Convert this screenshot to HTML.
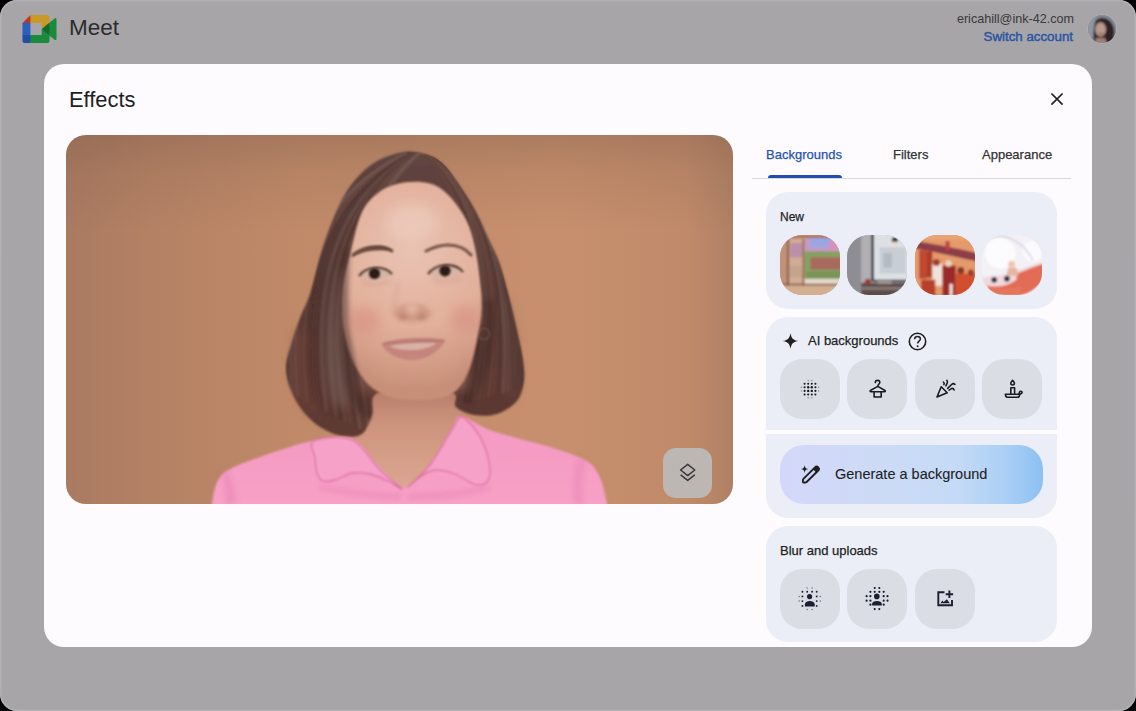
<!DOCTYPE html>
<html><head><meta charset="utf-8">
<style>
*{box-sizing:border-box;margin:0;padding:0}
html,body{width:1136px;height:711px;overflow:hidden;background:#000;font-family:"Liberation Sans",sans-serif}
.frame{position:absolute;left:0;top:0;width:1136px;height:711px;background:#a7a5a8;border-radius:17px;overflow:hidden;box-shadow:inset 0 0 0 1.5px #b2b0b3}
.abs{position:absolute;white-space:nowrap}
.modal{position:absolute;left:44px;top:64px;width:1048px;height:583px;background:#fdfbfe;border-radius:20px}
.card{position:absolute;left:766px;width:291px;background:#ebeef6}
.btn{position:absolute;width:60px;height:60px;background:#dadde4;border-radius:22px}
.btn svg{position:absolute;left:0;top:0}
.med{-webkit-text-stroke:0.25px currentColor}
.thumb{position:absolute;top:235px;width:60px;height:60px;border-radius:22px;overflow:hidden}
</style></head><body>
<div class="frame">
  <!-- header -->
  <svg class="abs" style="left:22px;top:15px" width="35" height="28" viewBox="0 0 87.5 72">
    <g>
    <path fill="#136a2c" d="M49.5 36l8.53 9.75 11.47 7.33 2-17.02-2-16.64-11.69 6.44z"/>
    <path fill="#1f4fa6" d="M0 51.5V66c0 3.315 2.685 6 6 6h14.5l3-10.96-3-9.54-9.950-3z"/>
    <path fill="#b8392c" d="M20.5 0L0 20.5l10.55 3 9.95-3 2.950-9.41z"/>
    <path fill="#2a5fc2" d="M20.5 20.5H0v31h20.5z"/>
    <path fill="#1a8a3c" d="M82.6 8.68L69.5 19.42v33.66l13.16 10.79c1.97 1.54 4.85.135 4.85-2.37V11c0-2.535-2.945-3.925-4.91-2.32zM49.5 36v15.5h-29V72h43c3.315 0 6-2.685 6-6V53.08z"/>
    <path fill="#c99a26" d="M63.5 0h-43v20.5h29V36l20-16.57V6c0-3.315-2.685-6-6-6z"/>
    </g>
  </svg>
  <div class="abs" style="left:69px;top:15px;font-size:22.5px;color:#2d2c2e;line-height:26px">Meet</div>
  <div class="abs" style="right:62px;top:11px;font-size:12.6px;color:#3a393b;line-height:16px">ericahill@ink-42.com</div>
  <div class="abs" style="right:63px;top:29px;font-size:13.3px;color:#2a56a2;line-height:16px;-webkit-text-stroke:0.45px #2a56a2">Switch account</div>
  <div class="abs" style="left:1087.5px;top:14.5px;width:28px;height:28px;border-radius:50%;overflow:hidden;background:#7f8690;box-shadow:0 0 0 0.8px #b4b2b6">
    <svg width="28" height="28" viewBox="0 0 28 28"><defs><filter id="av"><feGaussianBlur stdDeviation="0.8"/></filter></defs>
    <g filter="url(#av)">
    <rect width="28" height="28" fill="#858c96"/>
    <rect x="0" y="0" width="8" height="28" fill="#8f96a0"/>
    <path d="M12 3 C 19 2 24 6 26 13 C 27 19 26 25 24 28 L 6 28 C 5 22 5.5 12 7 8 C 8 5 10 3.5 12 3 Z" fill="#2f2421"/>
    <ellipse cx="12.6" cy="14.5" rx="5.4" ry="7.2" fill="#b9998e"/>
    <path d="M8 23 L 17 23 L 19 28 L 7 28 Z" fill="#9f8076"/>
    <path d="M10.5 18 C 11.8 19.6 14 19.6 15.3 18" stroke="#6a4844" stroke-width="1" fill="none"/>
    <path d="M7 6 C 10 3 16 3 19 7 L 16 8 C 14 6 11 6 9 9 Z" fill="#2f2421"/>
    </g></svg>
  </div>

  <div class="modal"></div>
  <div class="abs" style="left:69px;top:87px;font-size:21.9px;color:#1f1f1f;line-height:26px">Effects</div>
  <svg class="abs" style="left:1045px;top:87px" width="24" height="24" viewBox="0 0 24 24"><path d="M6.4 6.5L17.6 17.7M17.6 6.5L6.4 17.7" stroke="#1f1f1f" stroke-width="1.7"/></svg>

  <!-- photo -->
  <div class="abs" style="left:66px;top:135px;width:667px;height:369px;border-radius:20px;overflow:hidden"><svg style="position:absolute;left:0;top:0" width="667" height="369" viewBox="66 135 667 369">
  <defs>
    <linearGradient id="bgx" x1="66" y1="0" x2="733" y2="0" gradientUnits="userSpaceOnUse">
      <stop offset="0" stop-color="#a97a61"/>
      <stop offset="0.125" stop-color="#b48164"/>
      <stop offset="0.35" stop-color="#c08a69"/>
      <stop offset="0.74" stop-color="#c78f6d"/>
      <stop offset="0.93" stop-color="#c08a6a"/>
      <stop offset="1" stop-color="#b08064"/>
    </linearGradient>
    <linearGradient id="bgtop" x1="0" y1="135" x2="0" y2="504" gradientUnits="userSpaceOnUse">
      <stop offset="0" stop-color="#6e5041" stop-opacity="0.3"/>
      <stop offset="0.1" stop-color="#6e5041" stop-opacity="0.13"/>
      <stop offset="0.26" stop-color="#6e5041" stop-opacity="0"/>
      <stop offset="1" stop-color="#6e5041" stop-opacity="0"/>
    </linearGradient>
    <linearGradient id="hairg" x1="0" y1="150" x2="0" y2="435" gradientUnits="userSpaceOnUse">
      <stop offset="0" stop-color="#614541"/>
      <stop offset="0.5" stop-color="#553832"/>
      <stop offset="1" stop-color="#5e3a30"/>
    </linearGradient>
    <radialGradient id="skin" cx="411" cy="250" r="140" gradientUnits="userSpaceOnUse">
      <stop offset="0" stop-color="#e9c3b3"/>
      <stop offset="0.55" stop-color="#e2b09b"/>
      <stop offset="1" stop-color="#c99079"/>
    </radialGradient>
    <linearGradient id="neckg" x1="0" y1="385" x2="0" y2="490" gradientUnits="userSpaceOnUse">
      <stop offset="0" stop-color="#b27a66"/>
      <stop offset="0.35" stop-color="#cc937c"/>
      <stop offset="1" stop-color="#dca892"/>
    </linearGradient>
    <linearGradient id="shirtg" x1="0" y1="420" x2="0" y2="504" gradientUnits="userSpaceOnUse">
      <stop offset="0" stop-color="#f49ac3"/>
      <stop offset="1" stop-color="#f8a0c6"/>
    </linearGradient>
    <filter id="b1" filterUnits="userSpaceOnUse" x="66" y="135" width="667" height="369"><feGaussianBlur stdDeviation="1"/></filter>
    <filter id="b2" filterUnits="userSpaceOnUse" x="66" y="135" width="667" height="369"><feGaussianBlur stdDeviation="2.5"/></filter>
    <filter id="b4" filterUnits="userSpaceOnUse" x="66" y="135" width="667" height="369"><feGaussianBlur stdDeviation="6"/></filter>
  </defs>
  <rect x="66" y="135" width="667" height="369" fill="url(#bgx)"/>
  <rect x="66" y="135" width="667" height="369" fill="url(#bgtop)"/>
  <path filter="url(#b1)" fill="url(#neckg)" d="M366.0 370.0 C382.7 363.0 444.0 363.3 460.0 370.0 C476.0 376.7 460.3 400.8 462.0 410.0 C463.7 419.2 473.7 415.7 470.0 425.0 C466.3 434.3 450.8 455.5 440.0 466.0 C429.2 476.5 416.3 488.0 405.0 488.0 C393.7 488.0 381.8 474.0 372.0 466.0 C362.2 458.0 348.0 449.0 346.0 440.0 C344.0 431.0 356.7 423.7 360.0 412.0 C363.3 400.3 349.3 377.0 366.0 370.0 Z"/>
  <path filter="url(#b1)" fill="url(#hairg)" d="M404.0 152.0 C412.0 150.8 418.7 152.2 425.0 154.0 C431.3 155.8 436.5 158.2 442.0 163.0 C447.5 167.8 452.5 175.2 458.0 183.0 C463.5 190.8 469.8 200.5 475.0 210.0 C480.2 219.5 485.0 231.3 489.0 240.0 C493.0 248.7 495.8 253.2 499.0 262.0 C502.2 270.8 505.0 281.7 508.0 293.0 C511.0 304.3 514.5 318.8 517.0 330.0 C519.5 341.2 521.8 351.5 523.0 360.0 C524.2 368.5 525.0 374.2 524.0 381.0 C523.0 387.8 521.5 395.5 517.0 401.0 C512.5 406.5 504.2 411.7 497.0 414.0 C489.8 416.3 480.8 416.2 474.0 415.0 C467.2 413.8 460.0 410.8 456.0 407.0 C452.0 403.2 462.7 394.5 450.0 392.0 C437.3 389.5 393.0 388.2 380.0 392.0 C367.0 395.8 375.0 408.0 372.0 415.0 C369.0 422.0 367.0 430.5 362.0 434.0 C357.0 437.5 349.0 437.2 342.0 436.0 C335.0 434.8 326.7 431.3 320.0 427.0 C313.3 422.7 307.0 416.5 302.0 410.0 C297.0 403.5 292.7 395.3 290.0 388.0 C287.3 380.7 285.7 373.7 286.0 366.0 C286.3 358.3 289.7 350.0 292.0 342.0 C294.3 334.0 297.0 326.0 300.0 318.0 C303.0 310.0 306.3 305.3 310.0 294.0 C313.7 282.7 317.3 264.3 322.0 250.0 C326.7 235.7 332.5 219.7 338.0 208.0 C343.5 196.3 348.5 187.8 355.0 180.0 C361.5 172.2 368.8 165.7 377.0 161.0 C385.2 156.3 396.0 153.2 404.0 152.0 Z"/>
  <defs><clipPath id="hairclip"><path d="M404.0 152.0 C412.0 150.8 418.7 152.2 425.0 154.0 C431.3 155.8 436.5 158.2 442.0 163.0 C447.5 167.8 452.5 175.2 458.0 183.0 C463.5 190.8 469.8 200.5 475.0 210.0 C480.2 219.5 485.0 231.3 489.0 240.0 C493.0 248.7 495.8 253.2 499.0 262.0 C502.2 270.8 505.0 281.7 508.0 293.0 C511.0 304.3 514.5 318.8 517.0 330.0 C519.5 341.2 521.8 351.5 523.0 360.0 C524.2 368.5 525.0 374.2 524.0 381.0 C523.0 387.8 521.5 395.5 517.0 401.0 C512.5 406.5 504.2 411.7 497.0 414.0 C489.8 416.3 480.8 416.2 474.0 415.0 C467.2 413.8 460.0 410.8 456.0 407.0 C452.0 403.2 462.7 394.5 450.0 392.0 C437.3 389.5 393.0 388.2 380.0 392.0 C367.0 395.8 375.0 408.0 372.0 415.0 C369.0 422.0 367.0 430.5 362.0 434.0 C357.0 437.5 349.0 437.2 342.0 436.0 C335.0 434.8 326.7 431.3 320.0 427.0 C313.3 422.7 307.0 416.5 302.0 410.0 C297.0 403.5 292.7 395.3 290.0 388.0 C287.3 380.7 285.7 373.7 286.0 366.0 C286.3 358.3 289.7 350.0 292.0 342.0 C294.3 334.0 297.0 326.0 300.0 318.0 C303.0 310.0 306.3 305.3 310.0 294.0 C313.7 282.7 317.3 264.3 322.0 250.0 C326.7 235.7 332.5 219.7 338.0 208.0 C343.5 196.3 348.5 187.8 355.0 180.0 C361.5 172.2 368.8 165.7 377.0 161.0 C385.2 156.3 396.0 153.2 404.0 152.0 Z"/></clipPath></defs><g clip-path="url(#hairclip)" filter="url(#b1)"><path d="M420.0 153.0 Q330.0 230.0 370.0 434.0" stroke="#86716a" stroke-width="2.1" opacity="0.44" fill="none"/><path d="M419.1 152.9 Q326.6 229.1 365.2 431.5" stroke="#7a5548" stroke-width="2.3" opacity="0.22" fill="none"/><path d="M418.2 152.9 Q323.2 228.2 360.4 429.1" stroke="#86716a" stroke-width="2.9" opacity="0.35" fill="none"/><path d="M417.4 152.8 Q319.8 227.4 355.5 426.6" stroke="#3e2722" stroke-width="2.2" opacity="0.21" fill="none"/><path d="M416.5 152.8 Q316.4 226.5 350.7 424.1" stroke="#7a5548" stroke-width="2.3" opacity="0.26" fill="none"/><path d="M415.6 152.7 Q312.9 225.6 345.9 421.6" stroke="#7a5548" stroke-width="1.7" opacity="0.41" fill="none"/><path d="M414.7 152.6 Q309.5 224.7 341.1 419.2" stroke="#3e2722" stroke-width="2.4" opacity="0.36" fill="none"/><path d="M413.8 152.6 Q306.1 223.8 336.2 416.7" stroke="#7a5548" stroke-width="2.1" opacity="0.34" fill="none"/><path d="M412.9 152.5 Q302.7 222.9 331.4 414.2" stroke="#3e2722" stroke-width="2.8" opacity="0.21" fill="none"/><path d="M412.1 152.5 Q299.3 222.1 326.6 411.8" stroke="#86716a" stroke-width="2.3" opacity="0.30" fill="none"/><path d="M411.2 152.4 Q295.9 221.2 321.8 409.3" stroke="#4a302a" stroke-width="2.7" opacity="0.28" fill="none"/><path d="M410.3 152.4 Q292.5 220.3 316.9 406.8" stroke="#3e2722" stroke-width="2.4" opacity="0.23" fill="none"/><path d="M409.4 152.3 Q289.1 219.4 312.1 404.4" stroke="#3e2722" stroke-width="2.3" opacity="0.29" fill="none"/><path d="M408.5 152.2 Q285.6 218.5 307.3 401.9" stroke="#7a5548" stroke-width="2.4" opacity="0.34" fill="none"/><path d="M407.6 152.2 Q282.2 217.6 302.5 399.4" stroke="#6b4538" stroke-width="2.1" opacity="0.37" fill="none"/><path d="M406.8 152.1 Q278.8 216.8 297.6 396.9" stroke="#86716a" stroke-width="2.9" opacity="0.32" fill="none"/><path d="M405.9 152.1 Q275.4 215.9 292.8 394.5" stroke="#86716a" stroke-width="2.7" opacity="0.27" fill="none"/><path d="M405.0 152.0 Q272.0 215.0 288.0 392.0" stroke="#3e2722" stroke-width="2.0" opacity="0.22" fill="none"/><path d="M424.0 153.0 Q500.0 230.0 455.0 406.0" stroke="#6b4538" stroke-width="2.6" opacity="0.42" fill="none"/><path d="M424.6 153.1 Q501.6 229.3 459.8 404.7" stroke="#7d6a62" stroke-width="1.6" opacity="0.35" fill="none"/><path d="M425.1 153.1 Q503.1 228.6 464.6 403.4" stroke="#4a302a" stroke-width="2.6" opacity="0.30" fill="none"/><path d="M425.7 153.2 Q504.7 227.9 469.4 402.1" stroke="#3e2722" stroke-width="2.1" opacity="0.43" fill="none"/><path d="M426.3 153.3 Q506.3 227.1 474.1 400.9" stroke="#7a5548" stroke-width="2.4" opacity="0.39" fill="none"/><path d="M426.9 153.4 Q507.9 226.4 478.9 399.6" stroke="#7d6a62" stroke-width="2.0" opacity="0.29" fill="none"/><path d="M427.4 153.4 Q509.4 225.7 483.7 398.3" stroke="#6b4538" stroke-width="2.2" opacity="0.34" fill="none"/><path d="M428.0 153.5 Q511.0 225.0 488.5 397.0" stroke="#7a5548" stroke-width="2.2" opacity="0.44" fill="none"/><path d="M428.6 153.6 Q512.6 224.3 493.3 395.7" stroke="#7a5548" stroke-width="2.6" opacity="0.22" fill="none"/><path d="M429.1 153.6 Q514.1 223.6 498.1 394.4" stroke="#4a302a" stroke-width="2.7" opacity="0.45" fill="none"/><path d="M429.7 153.7 Q515.7 222.9 502.9 393.1" stroke="#7d6a62" stroke-width="2.8" opacity="0.38" fill="none"/><path d="M430.3 153.8 Q517.3 222.1 507.6 391.9" stroke="#7d6a62" stroke-width="2.2" opacity="0.21" fill="none"/><path d="M430.9 153.9 Q518.9 221.4 512.4 390.6" stroke="#3e2722" stroke-width="2.2" opacity="0.35" fill="none"/><path d="M431.4 153.9 Q520.4 220.7 517.2 389.3" stroke="#3e2722" stroke-width="1.7" opacity="0.39" fill="none"/><path d="M432.0 154.0 Q522.0 220.0 522.0 388.0" stroke="#3e2722" stroke-width="2.9" opacity="0.30" fill="none"/></g>
  <path filter="url(#b1)" fill="url(#skin)" d="M421.0 182.0 C428.2 182.7 434.2 184.3 440.0 188.0 C445.8 191.7 451.2 197.7 456.0 204.0 C460.8 210.3 465.7 218.0 469.0 226.0 C472.3 234.0 474.2 243.0 476.0 252.0 C477.8 261.0 479.0 270.5 480.0 280.0 C481.0 289.5 482.3 299.7 482.0 309.0 C481.7 318.3 480.0 326.2 478.0 336.0 C476.0 345.8 473.3 359.2 470.0 368.0 C466.7 376.8 463.0 384.0 458.0 389.0 C453.0 394.0 447.5 396.2 440.0 398.0 C432.5 399.8 421.3 400.2 413.0 400.0 C404.7 399.8 397.2 399.3 390.0 397.0 C382.8 394.7 376.0 391.5 370.0 386.0 C364.0 380.5 358.2 372.3 354.0 364.0 C349.8 355.7 347.0 345.3 345.0 336.0 C343.0 326.7 342.2 317.3 342.0 308.0 C341.8 298.7 342.5 289.7 344.0 280.0 C345.5 270.3 348.0 261.3 351.0 250.0 C354.0 238.7 357.5 221.5 362.0 212.0 C366.5 202.5 372.2 197.7 378.0 193.0 C383.8 188.3 389.8 185.8 397.0 184.0 C404.2 182.2 413.8 181.3 421.0 182.0 Z"/>
  <!-- hair shading / streaks -->
  <path filter="url(#b2)" fill="#3f2823" opacity="0.5" d="M346 250 C 336 290 332 340 346 395 C 356 410 366 420 372 420 C 365 400 356 370 351 340 C 348 320 347 290 350 250 Z"/>
  <path filter="url(#b2)" fill="#3f2823" opacity="0.45" d="M483 300 C 483 340 476 370 456 400 L 470 405 C 490 380 498 340 496 300 Z"/>
  <path filter="url(#b4)" fill="#8a7770" opacity="0.45" d="M338 270 C 324 320 322 370 334 405 L 350 408 C 342 370 340 320 342 270 Z"/>
  <path filter="url(#b4)" fill="#7c4a3e" opacity="0.45" d="M296 330 C 290 360 292 390 310 416 L 320 412 C 304 390 302 360 308 330 Z"/>
  <path filter="url(#b4)" fill="#7a5e55" opacity="0.35" d="M500 300 C 508 330 512 360 505 395 L 515 395 C 520 360 516 330 508 300 Z"/>
  <!-- shirt -->
  <path filter="url(#b1)" fill="url(#shirtg)" d="M212.0 520.0 C180.7 515.7 211.5 509.3 212.0 504.0 C212.5 498.7 213.5 492.7 215.0 488.0 C216.5 483.3 218.2 479.3 221.0 476.0 C223.8 472.7 225.5 471.2 232.0 468.0 C238.5 464.8 250.3 460.5 260.0 457.0 C269.7 453.5 281.0 449.7 290.0 447.0 C299.0 444.3 303.7 442.3 314.0 441.0 C324.3 439.7 341.3 434.8 352.0 439.0 C362.7 443.2 369.5 458.0 378.0 466.0 C386.5 474.0 394.7 486.7 403.0 487.0 C411.3 487.3 419.8 477.5 428.0 468.0 C436.2 458.5 446.5 438.5 452.0 430.0 C457.5 421.5 454.7 417.0 461.0 417.0 C467.3 417.0 480.2 426.3 490.0 430.0 C499.8 433.7 510.0 436.2 520.0 439.0 C530.0 441.8 540.7 444.2 550.0 447.0 C559.3 449.8 569.0 453.0 576.0 456.0 C583.0 459.0 587.8 461.0 592.0 465.0 C596.2 469.0 598.8 475.0 601.0 480.0 C603.2 485.0 604.0 491.0 605.0 495.0 C606.0 499.0 606.7 499.8 607.0 504.0 C607.3 508.2 641.5 515.7 607.0 520.0 C572.5 524.3 465.8 530.0 400.0 530.0 C334.2 530.0 243.3 524.3 212.0 520.0 Z"/>
  <path filter="url(#b1)" fill="#f6a2c8" stroke="#dc6fa4" stroke-width="1.3" d="M314.0 441.0 C307.8 444.0 314.5 452.7 315.0 458.0 C315.5 463.3 315.7 469.2 317.0 473.0 C318.3 476.8 320.0 479.8 323.0 481.0 C326.0 482.2 330.2 481.3 335.0 480.0 C339.8 478.7 346.2 474.0 352.0 473.0 C357.8 472.0 364.0 472.7 370.0 474.0 C376.0 475.3 382.7 478.5 388.0 481.0 C393.3 483.5 403.3 490.8 402.0 489.0 C400.7 487.2 388.3 478.2 380.0 470.0 C371.7 461.8 363.0 444.8 352.0 440.0 C341.0 435.2 320.2 438.0 314.0 441.0 Z"/>
  <path filter="url(#b1)" fill="#f6a2c8" stroke="#dc6fa4" stroke-width="1.3" d="M461.0 417.0 C464.7 416.7 470.2 423.3 474.0 428.0 C477.8 432.7 481.3 438.0 484.0 445.0 C486.7 452.0 489.7 463.7 490.0 470.0 C490.3 476.3 488.7 480.7 486.0 483.0 C483.3 485.3 479.2 485.5 474.0 484.0 C468.8 482.5 461.5 476.3 455.0 474.0 C448.5 471.7 440.8 469.5 435.0 470.0 C429.2 470.5 424.5 474.2 420.0 477.0 C415.5 479.8 406.3 489.0 408.0 487.0 C409.7 485.0 422.7 474.5 430.0 465.0 C437.3 455.5 446.8 438.0 452.0 430.0 C457.2 422.0 457.3 417.3 461.0 417.0 Z"/>
  <path filter="url(#b2)" fill="#e27cae" opacity="0.35" d="M322 484 C 340 490 380 492 401 494 L 401 500 C 370 498 340 495 318 490 Z"/>
  <path filter="url(#b2)" fill="#e27cae" opacity="0.35" d="M488 484 C 470 490 440 492 408 494 L 408 500 C 440 500 470 496 490 490 Z"/>
  <path filter="url(#b2)" fill="#e27cae" opacity="0.4" d="M226 470 C 232 480 236 492 236 504 L 226 504 C 226 492 224 480 222 472 Z"/>
  <path filter="url(#b2)" fill="#e27cae" opacity="0.35" d="M578 458 C 574 470 572 488 574 504 L 584 504 C 582 488 582 472 586 460 Z"/>
  <!-- eyebrows -->
  <path filter="url(#b1)" fill="#5e4034" opacity="0.85" d="M351 257 C 358 250 368 246 376 246 C 384 246 390 248 393 251 C 386 250 378 250 370 251 C 362 252 356 255 351 257 Z"/>
  <path filter="url(#b1)" fill="none" stroke="#5e4034" stroke-width="3" opacity="0.85" stroke-linecap="round" d="M353 255 C 360 249 370 247 378 247 C 384 247 389 249 392 251"/>
  <path filter="url(#b1)" fill="none" stroke="#5e4034" stroke-width="3" opacity="0.85" stroke-linecap="round" d="M426 251 C 432 248 440 245 448 245 C 458 245 466 249 471 255"/>
  <!-- eyes -->
  <path filter="url(#b1)" fill="#d6b4a6" d="M360 276 C 366 267 384 266 391 275 C 384 280 366 281 360 276 Z"/>
  <path filter="url(#b1)" fill="#d6b4a6" d="M429 274 C 436 265 455 264 462 272 C 455 277 436 278 429 274 Z"/>
  <circle filter="url(#b1)" cx="374.5" cy="273.5" r="5.6" fill="#2a1c19"/>
  <circle filter="url(#b1)" cx="445" cy="270.8" r="5.6" fill="#2a1c19"/>
  <path filter="url(#b1)" fill="none" stroke="#3f2b26" stroke-width="2" d="M359 276 C 366 266 384 265 392 274"/>
  <path filter="url(#b1)" fill="none" stroke="#3f2b26" stroke-width="2" d="M428 274 C 436 263 455 262 463 272"/>
  <path filter="url(#b2)" fill="none" stroke="#b98472" stroke-width="2" opacity="0.5" d="M362 282 C 370 285 382 285 390 281"/>
  <path filter="url(#b2)" fill="none" stroke="#b98472" stroke-width="2" opacity="0.5" d="M432 279 C 440 282 452 282 460 278"/>
  <!-- nose -->
  <path filter="url(#b2)" fill="#c08470" opacity="0.55" d="M393 314 C 398 324 426 324 432 314 C 428 306 420 304 413 304 C 404 304 396 306 393 314 Z"/>
  <ellipse filter="url(#b2)" cx="403" cy="317" rx="4" ry="2" fill="#8e5a4c" opacity="0.55"/>
  <ellipse filter="url(#b2)" cx="422" cy="317" rx="4" ry="2" fill="#8e5a4c" opacity="0.55"/>
  <ellipse filter="url(#b2)" cx="412" cy="309" rx="6" ry="5" fill="#eec6b4" opacity="0.6"/>
  <path filter="url(#b2)" fill="none" stroke="#c99482" stroke-width="3" opacity="0.4" d="M398 282 C 396 295 394 305 394 312"/>
  <!-- mouth -->
  <path filter="url(#b1)" fill="#c5857d" d="M381 344 C 396 337 430 336 446 340 C 438 354 424 360 412 360 C 398 360 387 354 381 344 Z"/>
  <path filter="url(#b1)" fill="#d9b2a6" d="M389 346 C 402 343 424 342 437 343 C 428 349 420 350 412 350 C 402 350 395 349 389 346 Z"/>
  <path filter="url(#b1)" fill="none" stroke="#9c5e58" stroke-width="1.2" opacity="0.6" d="M383 344 C 398 341 428 340 444 341"/>
  <!-- cheeks -->
  <ellipse filter="url(#b4)" cx="364" cy="320" rx="16" ry="13" fill="#d4857c" opacity="0.45"/>
  <ellipse filter="url(#b4)" cx="465" cy="318" rx="14" ry="13" fill="#d4857c" opacity="0.45"/>
  <ellipse filter="url(#b4)" cx="412" cy="222" rx="26" ry="18" fill="#f0d0c2" opacity="0.55"/>
  <path filter="url(#b4)" fill="#c08a75" opacity="0.35" d="M360 350 C 370 380 395 400 413 400 C 435 400 460 380 470 350 L 470 390 L 360 390 Z"/>
  <circle filter="url(#b1)" cx="484" cy="334" r="5.5" fill="none" stroke="#8a6e62" stroke-width="1.2" opacity="0.6"/>
</svg>



</div>
  <div class="abs" style="left:663px;top:448px;width:49px;height:50px;border-radius:13px;background:#bdb7b4"></div>

  <!-- tabs -->
  <div class="abs med" style="left:766px;top:147px;font-size:13px;color:#1f54b0;line-height:16px">Backgrounds</div>
  <div class="abs med" style="left:893px;top:147px;font-size:13px;color:#333;line-height:16px">Filters</div>
  <div class="abs med" style="left:982px;top:147px;font-size:13px;color:#333;line-height:16px">Appearance</div>
  <div class="abs" style="left:752px;top:177.5px;width:319px;height:1.2px;background:#d9dade"></div>
  <div class="abs" style="left:768px;top:175px;width:74px;height:3px;background:#1f4fab;border-radius:3px 3px 0 0"></div>

  <!-- New card -->
  <div class="card" style="top:192px;height:117px;border-radius:22px"></div>
  <div class="abs med" style="left:780px;top:209px;font-size:12px;color:#1f1f1f;line-height:16px">New</div>
  <div class="thumb" style="left:780px;background:#c79a86"><svg width="61" height="61" viewBox="0 0 60 60"><defs><filter id="tb1"><feGaussianBlur stdDeviation="0.8"/></filter></defs>
<g filter="url(#tb1)">
<rect x="-2" y="-2" width="64" height="64" fill="#cca48c"/>
<rect x="-2" y="0" width="10" height="50" fill="#c09278"/>
<rect x="9" y="5" width="14" height="42" fill="#d2ad96"/>
<rect x="10" y="8" width="12" height="14" fill="#bc8fa8"/>
<rect x="10" y="30" width="12" height="12" fill="#c4a48c"/>
<rect x="24" y="2" width="38" height="15" fill="#c49ac6"/>
<rect x="30" y="3" width="22" height="9" fill="#9aa6e4"/>
<rect x="48" y="6" width="14" height="8" fill="#d890b8"/>
<rect x="24" y="16" width="38" height="28" fill="#86a062"/>
<rect x="30" y="22" width="30" height="12" fill="#a86a5c"/>
<rect x="26" y="36" width="34" height="7" fill="#7a9458"/>
<rect x="24" y="43" width="38" height="6" fill="#e4d8cc"/>
<rect x="-2" y="49" width="64" height="13" fill="#d4ae90"/>
<rect x="7" y="4" width="2" height="46" fill="#8a5a40"/>
<rect x="22" y="4" width="2" height="46" fill="#a0705a"/>
<rect x="-2" y="0" width="64" height="3" fill="#ac765c"/>
<rect x="-2" y="48" width="64" height="1.5" fill="#7a5a48"/>
</g></svg></div>
  <div class="thumb" style="left:847px;background:#a8a6a8"><svg width="61" height="61" viewBox="0 0 60 60"><defs><filter id="tb2"><feGaussianBlur stdDeviation="0.8"/></filter></defs>
<g filter="url(#tb2)">
<rect x="-2" y="-2" width="64" height="64" fill="#d4d8dd"/>
<rect x="-2" y="-2" width="20" height="64" fill="#8e8d93"/>
<rect x="14" y="-2" width="10" height="52" fill="#b1afb3"/>
<rect x="24" y="-2" width="2.5" height="48" fill="#26262c"/>
<rect x="26.5" y="-2" width="36" height="47" fill="#dde1e6"/>
<rect x="32" y="12" width="26" height="26" fill="#c8ced4"/>
<rect x="36" y="18" width="8" height="14" fill="#b4bac2"/>
<circle cx="47" cy="5" r="3" fill="#3a3434"/>
<circle cx="47" cy="8.5" r="2.2" fill="#f0d8c4"/>
<rect x="26" y="44" width="36" height="2.5" fill="#4a4448"/>
<rect x="14" y="47" width="48" height="15" fill="#5c4c4a"/>
<rect x="30" y="45" width="14" height="3" fill="#a89c98"/>
<rect x="14" y="51" width="48" height="3" fill="#877874"/>
<circle cx="20.5" cy="46" r="3" fill="#9a3a34"/>
</g></svg></div>
  <div class="thumb" style="left:915px;background:#d9825f"><svg width="61" height="61" viewBox="0 0 60 60"><defs><filter id="tb3"><feGaussianBlur stdDeviation="0.8"/></filter></defs>
<g filter="url(#tb3)">
<rect x="-2" y="-2" width="64" height="64" fill="#e49a6a"/>
<path d="M-2 6 C 15 8 35 12 62 18 L 62 26 C 40 22 20 16 -2 13 Z" fill="#8c3c48"/>
<rect x="-2" y="-2" width="64" height="7" fill="#e8a472"/>
<rect x="30" y="6" width="4" height="9" fill="#c04040"/>
<rect x="4" y="15" width="7" height="28" fill="#c04a30"/>
<rect x="11" y="16" width="6" height="26" fill="#b03a28"/>
<rect x="17" y="28" width="10" height="22" fill="#f0e2da"/>
<circle cx="21" cy="27" r="3.5" fill="#a04030"/>
<rect x="27" y="30" width="13" height="30" fill="#9a2c2a"/>
<circle cx="33" cy="28" r="3.2" fill="#ecd2c0"/>
<rect x="40" y="38" width="22" height="24" fill="#d2502e"/>
<circle cx="45" cy="35" r="3.5" fill="#8a3424"/>
<circle cx="55" cy="37" r="3" fill="#9a3a2a"/>
<rect x="6" y="44" width="14" height="16" fill="#b8402c"/>
<rect x="34" y="48" width="3" height="12" fill="#f4e8e0"/>
</g></svg></div>
  <div class="thumb" style="left:982px;background:#eed9dc"><svg width="61" height="61" viewBox="0 0 60 60"><defs><filter id="tb4"><feGaussianBlur stdDeviation="0.8"/></filter></defs>
<g filter="url(#tb4)">
<rect x="-2" y="-2" width="64" height="64" fill="#f3f1f6"/>
<circle cx="18" cy="18" r="15" fill="#fcfbfd"/>
<circle cx="50" cy="16" r="10" fill="#fbfafc"/>
<path d="M8 2 C 25 -2 42 8 50 25" fill="none" stroke="#c9c4d2" stroke-width="1.1"/>
<path d="M0 42 C 8 40 18 40 26 38 C 36 34 48 30 62 26 L 62 40 C 55 52 40 62 24 60 C 12 58 4 52 0 46 Z" fill="#f1d8dc"/>
<path d="M34 38 C 44 34 54 30 62 28 L 62 40 C 56 54 42 62 24 60 C 14 59 8 56 4 50 C 14 52 26 50 34 44 Z" fill="#e26c54"/>
<path d="M4 50 C 14 54 26 54 40 50 L 36 60 L 10 60 Z" fill="#e5765c"/>
<circle cx="12" cy="44" r="2.8" fill="#2a3040"/>
<circle cx="24.5" cy="43" r="2.8" fill="#2a3040"/>
<circle cx="29" cy="28.5" r="3.2" fill="#f1c2ae"/>
<path d="M26 32 L 34 32 L 36 40 L 24 40 Z" fill="#eab4a2"/>
</g></svg></div>

  <!-- AI card -->
  <div class="card" style="top:317px;height:112.5px;border-radius:22px 22px 0 0"></div>
  <div class="card" style="top:433.5px;height:84.5px;border-radius:0 0 22px 22px"></div>
  <div class="abs med" style="left:808px;top:333px;font-size:13px;color:#1f1f1f;line-height:16px">AI backgrounds</div>
  <div class="btn" style="left:780px;top:359px"></div>
  <div class="btn" style="left:847px;top:359px"></div>
  <div class="btn" style="left:915px;top:359px"></div>
  <div class="btn" style="left:982px;top:359px"></div>
  <div class="abs" style="left:780px;top:445px;width:263px;height:59px;border-radius:24px;background:linear-gradient(90deg,#d4d8f8 0%,#cbdbf6 45%,#c4daf6 68%,#acd0f5 85%,#8cc0f3 100%)"></div>
  <div class="abs" style="left:835px;top:465px;font-size:14.5px;color:#1f1f1f;-webkit-text-stroke:0.1px #1f1f1f;line-height:18px">Generate a background</div>

  <!-- Blur card -->
  <div class="card" style="top:526px;height:116px;border-radius:22px"></div>
  <div class="abs med" style="left:780px;top:543px;font-size:13px;color:#1f1f1f;line-height:16px">Blur and uploads</div>
  <div class="btn" style="left:780px;top:569px"></div>
  <div class="btn" style="left:847px;top:569px"></div>
  <div class="btn" style="left:915px;top:569px"></div>
<!-- ICONS -->
<svg style="position:absolute;left:0;top:0" width="1136" height="711" viewBox="0 0 1136 711">
  <g fill="#1f1f1f">
    <!-- sparkle -->
    <path d="M790.5 333 C 791.2 338.2 793.3 340.3 798.5 341 C 793.3 341.7 791.2 343.8 790.5 349 C 789.8 343.8 787.7 341.7 782.5 341 C 787.7 340.3 789.8 338.2 790.5 333 Z"/>
  </g>
  <!-- help -->
  <circle cx="917.5" cy="341.5" r="8.2" fill="none" stroke="#1f1f1f" stroke-width="1.6"/>
  <path d="M914.6 339.3 C 914.6 337.5 915.9 336.4 917.5 336.4 C 919.2 336.4 920.4 337.5 920.4 339 C 920.4 341 917.6 341.2 917.6 343.6" fill="none" stroke="#1f1f1f" stroke-width="1.5"/>
  <circle cx="917.6" cy="346.2" r="1" fill="#1f1f1f"/>
  <!-- grid dots -->
  <g fill="#1a1c24">
    <circle cx="804.6" cy="383.7" r="1.05"/><circle cx="808.2" cy="383.7" r="1.05"/><circle cx="811.8" cy="383.7" r="1.05"/><circle cx="815.4" cy="383.7" r="1.05"/>
    <circle cx="804.6" cy="387.3" r="1.05"/><circle cx="808.2" cy="387.3" r="1.2"/><circle cx="811.8" cy="387.3" r="1.2"/><circle cx="815.4" cy="387.3" r="1.05"/>
    <circle cx="804.6" cy="390.9" r="1.05"/><circle cx="808.2" cy="390.9" r="1.2"/><circle cx="811.8" cy="390.9" r="1.2"/><circle cx="815.4" cy="390.9" r="1.05"/>
    <circle cx="804.6" cy="394.5" r="1.05"/><circle cx="808.2" cy="394.5" r="1.05"/><circle cx="811.8" cy="394.5" r="1.05"/><circle cx="815.4" cy="394.5" r="1.05"/>
    <g opacity="0.45">
    <circle cx="808.2" cy="380.5" r="0.7"/><circle cx="811.8" cy="380.5" r="0.7"/>
    <circle cx="808.2" cy="397.7" r="0.7"/><circle cx="811.8" cy="397.7" r="0.7"/>
    <circle cx="801.4" cy="387.3" r="0.7"/><circle cx="801.4" cy="390.9" r="0.7"/>
    <circle cx="818.6" cy="387.3" r="0.7"/><circle cx="818.6" cy="390.9" r="0.7"/>
    </g>
  </g>
  <!-- hanger -->
  <g fill="none" stroke="#1a1c24" stroke-width="1.6" stroke-linejoin="round" stroke-linecap="round">
    <path d="M875.3 382.6 C 875.3 381.2 876.4 380.4 877.6 380.4 C 878.9 380.4 879.8 381.3 879.8 382.5 C 879.8 383.9 877.8 384.3 877.8 386.4"/>
    <path d="M877.8 386.4 L 870.8 390.3 C 869.6 391 869.9 391.8 871.2 391.8 L 884.2 391.8 C 885.5 391.8 885.8 391 884.6 390.3 Z"/>
    <path d="M874.1 391.8 L 874.1 397 L 881.2 397 L 881.2 391.8"/>
  </g>
  <!-- party popper -->
  <g fill="none" stroke="#1a1c24" stroke-width="1.6" stroke-linejoin="round" stroke-linecap="round">
    <path d="M937 397 L 941.2 386.8 L 947.2 392.8 Z"/>
    <path d="M943.4 382 C 944.3 382.8 944.4 383.8 943.9 384.6"/>
    <path d="M946.8 380.3 C 947.8 381.5 947.6 383.2 945.9 385.8"/>
    <path d="M947.6 388.3 L 951.6 384.5 C 952.6 383.6 954 383.5 954.9 384.4"/>
    <path d="M949 390.1 L 951.5 388.6 C 952.5 388.2 953.6 388.8 954.1 389.9"/>
  </g>
  <!-- candle -->
  <g fill="none" stroke="#1a1c24" stroke-width="1.6" stroke-linejoin="round" stroke-linecap="round">
    <path d="M1012.6 380.3 C 1013.8 381.7 1014.4 382.5 1014.4 383.3 C 1014.4 384.3 1013.6 385 1012.6 385 C 1011.6 385 1010.8 384.3 1010.8 383.3 C 1010.8 382.5 1011.4 381.7 1012.6 380.3 Z"/>
    <path d="M1010.8 393.6 L 1010.8 387.7 L 1014.6 387.7 L 1014.6 393.6"/>
    <path d="M1005.4 394.3 L 1018.8 394.3 L 1019.6 392 C 1020.1 391.2 1021.2 391 1021.8 391.7 C 1022.3 392.4 1022 393.2 1021.2 393.6 L 1019.8 394.3 C 1019.6 396.2 1018.8 397.2 1017.4 397.2 L 1007.4 397.2 C 1006 397.2 1005.4 396.2 1005.4 394.3 Z"/>
  </g>
  <!-- wand -->
  <path d="M804.6 465.3 C 805 467.8 805.8 468.7 808.3 469.1 C 805.8 469.5 805 470.4 804.6 472.9 C 804.2 470.4 803.4 469.5 800.9 469.1 C 803.4 468.7 804.2 467.8 804.6 465.3 Z" fill="#1f1f1f"/>
  <path d="M815 467.3 C 815.9 466.4 817.3 466.4 818.2 467.3 C 819.1 468.2 819.1 469.6 818.2 470.5 L 806.6 482 C 806.2 482.4 805.7 482.5 805.2 482.5 L 803.6 482.5 C 803.2 482.5 802.9 482.2 802.9 481.8 L 802.9 480.2 C 802.9 479.7 803.1 479.2 803.4 478.9 Z" fill="none" stroke="#1f1f1f" stroke-width="1.9" stroke-linejoin="round"/><path d="M815 467.3 C 815.9 466.4 817.3 466.4 818.2 467.3 C 819.1 468.2 819.1 469.6 818.2 470.5 L 816.2 472.5 L 813 469.3 Z" fill="#1f1f1f"/>
  <!-- blur person 1 -->
  <g fill="#1a1f33">
    <circle cx="809.6" cy="596.6" r="2.6"/>
    <path d="M804.9 606.4 L 804.9 604.6 C 804.9 602.6 807 601.1 809.8 601.1 C 812.6 601.1 814.7 602.6 814.7 604.6 L 814.7 606.4 Z"/>
    <circle cx="802.4" cy="591.8" r="0.95"/><circle cx="807.2" cy="591.8" r="0.95"/><circle cx="812.1" cy="591.8" r="0.95"/><circle cx="816.7" cy="591.8" r="0.95"/>
    <circle cx="802.4" cy="596.4" r="0.95"/><circle cx="816.7" cy="596.4" r="0.95"/>
    <circle cx="802.4" cy="601.1" r="0.95"/><circle cx="816.7" cy="601.1" r="0.95"/>
    <circle cx="802.4" cy="605.9" r="0.95"/><circle cx="816.7" cy="605.9" r="0.95"/>
    <g opacity="0.55">
      <circle cx="807.2" cy="588" r="0.75"/><circle cx="812.1" cy="588" r="0.75"/>
      <circle cx="807.2" cy="609.4" r="0.75"/><circle cx="812.1" cy="609.4" r="0.75"/>
      <circle cx="799.2" cy="596.4" r="0.75"/><circle cx="799.2" cy="601.1" r="0.75"/>
      <circle cx="820.3" cy="596.4" r="0.75"/><circle cx="820.3" cy="601.1" r="0.75"/>
    </g>
  </g>
  <!-- blur person 2 -->
  <g fill="#1a1f33">
    <circle cx="876.8" cy="596.4" r="2.8"/>
    <path d="M872.1 605.6 L 872.1 604 C 872.1 602.3 874.2 601.1 876.9 601.1 C 879.6 601.1 881.8 602.3 881.8 604 L 881.8 605.6 Z"/>
    <circle cx="874.7" cy="588" r="1.1"/><circle cx="879.3" cy="588" r="1.1"/>
    <circle cx="870.4" cy="591.8" r="1.1"/><circle cx="874.7" cy="591.8" r="1.1"/><circle cx="879.3" cy="591.8" r="1.1"/><circle cx="883.7" cy="591.8" r="1.1"/>
    <circle cx="866.6" cy="596.2" r="1.1"/><circle cx="870.4" cy="596.2" r="1.1"/><circle cx="883.7" cy="596.2" r="1.1"/><circle cx="887.5" cy="596.2" r="1.1"/>
    <circle cx="866.6" cy="600.7" r="1.1"/><circle cx="870.4" cy="600.7" r="1.1"/><circle cx="883.7" cy="600.7" r="1.1"/><circle cx="887.5" cy="600.7" r="1.1"/>
    <circle cx="870.4" cy="604.7" r="1.1"/><circle cx="883.7" cy="604.7" r="1.1"/>
    <circle cx="874.7" cy="609.1" r="1.1"/><circle cx="879.3" cy="609.1" r="1.1"/>
  </g>
  <!-- add photo -->
  <g fill="none" stroke="#1a1f33" stroke-width="1.9">
    <path d="M944.5 592.2 L 938.3 592.2 L 938.3 605.3 L 952 605.3 L 952 600"/>
    <path d="M949.4 590.6 L 949.4 598 M 945.7 594.3 L 953.1 594.3"/>
  </g>
  <path d="M940.5 603.2 L 942.3 600.6 L 943.6 602 L 946.9 599.2 L 949.8 603.2 Z" fill="#1a1f33"/>
  <!-- layers -->
  <g fill="none" stroke="#3a3838" stroke-width="1.5" stroke-linejoin="round">
    <path d="M687.7 464.3 L 694.8 470 L 687.7 475.6 L 680.6 470 Z"/>
    <path d="M680.6 474.8 L 687.7 480.4 L 694.8 474.8"/>
  </g>
</svg>

</div>
</body></html>
